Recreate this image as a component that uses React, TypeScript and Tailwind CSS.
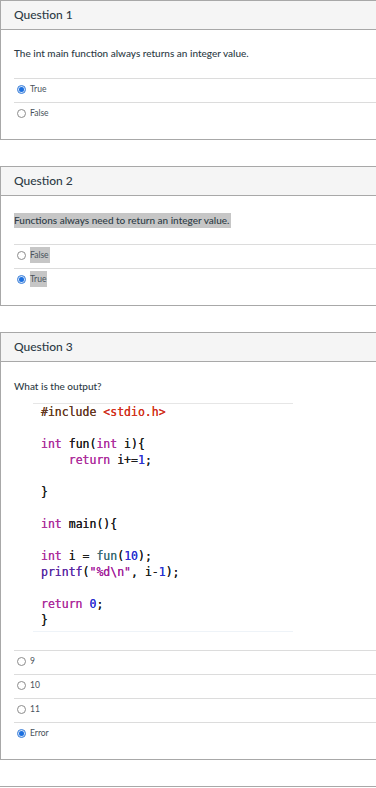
import React from 'react';

type Answer = { label: string; checked?: boolean };

function Radio({ checked }: { checked?: boolean }) {
  if (checked) {
    return (
      <span className="w-[9px] h-[9px] rounded-full border border-[#3b7fd9] bg-[#cfe0f7] flex items-center justify-center shrink-0">
        <span className="w-[5px] h-[5px] rounded-full bg-[#1a6fe0]" />
      </span>
    );
  }
  return <span className="w-[9px] h-[9px] rounded-full border border-[#8c8c8c] bg-white shrink-0" />;
}

function Answers({ items, highlight }: { items: Answer[]; highlight?: boolean }) {
  return (
    <div className="ml-[13px]">
      {items.map((a) => (
        <div key={a.label} className="h-[24px] border-t border-[#dcdcdc] pt-[2px]">
          <div className="h-[16px] flex items-center gap-[4px] pl-[3px]">
            <Radio checked={a.checked} />
            <span
              className={
                'text-[8.5px] leading-[16px] text-[#47525b] ' + (highlight ? 'bg-[#c6c6c6] pr-[1px]' : '')
              }
            >
              {a.label}
            </span>
          </div>
        </div>
      ))}
    </div>
  );
}

function Card({ title, children }: { title: string; children: React.ReactNode }) {
  return (
    <div className="w-[380px] border border-[#a8a8a8] bg-white">
      <div className="h-[29px] bg-[#f5f5f5] border-b border-[#a8a8a8] flex items-center pl-[13px]">
        <span className="text-[12px] text-[#2d3b45] font-medium">{title}</span>
      </div>
      {children}
    </div>
  );
}

const kw = 'text-[#ad2f9c]';
const num = 'text-[#2a2fd0]';

function Code() {
  return (
    <div
      className="ml-[32px] w-[260px] border-t border-[#e6e6e6] border-b border-b-[#eef3f8] mt-[9px] pl-[8px] pb-[3px] text-[11.5px] leading-[16px] text-[#1e1e1e] whitespace-pre [text-shadow:0_0_0.25px_currentColor]"
      style={{ fontFamily: '"DejaVu Sans Mono", monospace' }}
    >
      <div>
        <span className="text-[#643820]">#include </span>
        <span className="text-[#d1301f]">&lt;stdio.h&gt;</span>
      </div>
      <div>&nbsp;</div>
      <div>
        <span className={kw}>int</span> fun(<span className={kw}>int</span> i){'{'}
      </div>
      <div>
        {'    '}
        <span className={kw}>return</span> i+=<span className={num}>1</span>;
      </div>
      <div>&nbsp;</div>
      <div>{'}'}</div>
      <div>&nbsp;</div>
      <div>
        <span className={kw}>int</span> main(){'{'}
      </div>
      <div>&nbsp;</div>
      <div>
        <span className={kw}>int</span> i = <span className="text-[#3d6c74]">fun</span>(
        <span className={num}>10</span>);
      </div>
      <div>
        <span className="text-[#5b2aa3]">printf</span>(<span className="text-[#a3229a]">"%d\n"</span>, i-
        <span className={num}>1</span>);
      </div>
      <div>&nbsp;</div>
      <div>
        <span className={kw}>return</span> <span className={num}>0</span>;
      </div>
      <div>{'}'}</div>
    </div>
  );
}

export default function App() {
  return (
    <div
      className="w-[376px] h-[788px] overflow-hidden bg-white flex flex-col gap-[26px]"
      style={{ fontFamily: 'Lato, "Noto Sans", sans-serif' }}
    >
      <Card title="Question 1">
        <div className="pt-[16px] pb-[13px]">
          <p className="pl-[13px] text-[10px] leading-[15px] text-[#2d3b45] font-medium mb-[17px]">
            The int main function always returns an integer value.
          </p>
          <Answers items={[{ label: 'True', checked: true }, { label: 'False' }]} />
        </div>
      </Card>

      <Card title="Question 2">
        <div className="pt-[16px] pb-[13px]">
          <p className="pl-[13px] h-[15px] text-[10px] leading-[15px] text-[#2d3b45] font-medium mb-[17px]">
            <span className="inline-block bg-[#c6c6c6] pr-[2px] mt-[1px]">
              Functions always need to return an integer value.
            </span>
          </p>
          <Answers highlight items={[{ label: 'False' }, { label: 'True', checked: true }]} />
        </div>
      </Card>

      <Card title="Question 3">
        <div className="pt-[17px] pb-[13px]">
          <p className="pl-[13px] text-[10px] leading-[15px] text-[#2d3b45] font-medium">What is the output?</p>
          <Code />
          <div className="mt-[18px]">
            <Answers
              items={[{ label: '9' }, { label: '10' }, { label: '11' }, { label: 'Error', checked: true }]}
            />
          </div>
        </div>
      </Card>

      <div className="w-[380px] border-t border-[#a8a8a8] h-[10px]" />
    </div>
  );
}
